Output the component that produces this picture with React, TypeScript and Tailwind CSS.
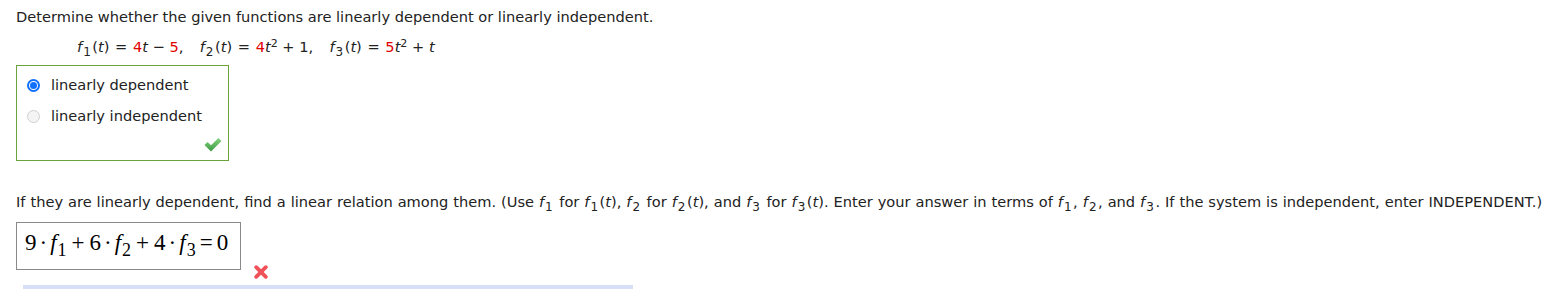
import React from 'react'

const R = ({ children }: { children: React.ReactNode }) => <span className="text-[#e00000]">{children}</span>
const I = ({ children }: { children: React.ReactNode }) => <i className="italic">{children}</i>
const Sub = ({ children }: { children: React.ReactNode }) => (
  <sub className="text-[12px] relative top-[4px] ml-[1px] mr-[1.5px]">{children}</sub>
)
const Eq = () => <span className="mx-[1px]">=</span>
const Gap = () => <span className="inline-block w-[7px]" />

function F({ n }: { n: number }) {
  return (
    <>
      <I>f</I>
      <Sub>{n}</Sub>
    </>
  )
}

function Check() {
  return (
    <svg width="18" height="15" viewBox="0 0 18 15">
      <defs>
        <linearGradient id="g" x1="0" y1="0" x2="0" y2="1">
          <stop offset="0" stopColor="#86d47f" />
          <stop offset="1" stopColor="#3a9a42" />
        </linearGradient>
      </defs>
      <path d="M0.5 8 L3.6 5 L7 8.3 L14.4 1 L17.5 4 L7 14.5 Z" fill="url(#g)" />
    </svg>
  )
}

function Cross() {
  return (
    <svg width="14" height="14" viewBox="0 0 14 14">
      <path d="M2.2 2.2 L11.8 11.8 M11.8 2.2 L2.2 11.8" stroke="#f0525a" strokeWidth="3.8" strokeLinecap="round" />
    </svg>
  )
}

function Radio({ checked }: { checked?: boolean }) {
  if (checked) {
    return (
      <span className="w-[13px] h-[13px] rounded-full border-2 border-[#0f6fff] flex items-center justify-center bg-white">
        <span className="w-[7px] h-[7px] rounded-full bg-[#0f6fff]" />
      </span>
    )
  }
  return <span className="w-[13px] h-[13px] rounded-full border border-[#d0d0d0] bg-[#f4f4f4]" />
}

const MSub = ({ children }: { children: React.ReactNode }) => (
  <sub className="text-[18px] relative top-[8px] ml-[1px]">{children}</sub>
)

export default function App() {
  return (
    <div className="w-[1554px] h-[289px] overflow-hidden bg-white text-[#222] text-[14.6px] font-['DejaVu_Sans','Verdana',sans-serif] pl-4 pt-[8px]">
      <p className="leading-[18px]">Determine whether the given functions are linearly dependent or linearly independent.</p>
      <p className="pl-[61px] mt-[12px] leading-[18px] whitespace-nowrap">
        <F n={1} />(<I>t</I>) <Eq /> <R>4</R><I>t</I> − <R>5</R>,&nbsp; <Gap /><F n={2} />(<I>t</I>) <Eq /> <R>4</R><I>t</I><sup className="text-[11px]">2</sup> + 1,&nbsp; <Gap /><F n={3} />(<I>t</I>) <Eq /> <R>5</R><I>t</I><sup className="text-[11px]">2</sup> + <I>t</I>
      </p>
      <div className="mt-[9px] w-[213px] h-[96px] border border-[#6aa33a] flex flex-col pl-[10px] pt-[10px]">
        <label className="flex items-center gap-[11px] h-[18px]">
          <Radio checked />
          <span>linearly dependent</span>
        </label>
        <label className="flex items-center gap-[11px] h-[18px] mt-[13px]">
          <Radio />
          <span>linearly independent</span>
        </label>
        <div className="flex justify-end pr-[6px] mt-[12px]">
          <Check />
        </div>
      </div>
      <p className="mt-[32px] leading-[18px] whitespace-nowrap [word-spacing:0.35px]">
        If they are linearly dependent, find a linear relation among them. (Use <F n={1} /> for <F n={1} />(<I>t</I>), <F n={2} /> for <F n={2} />(<I>t</I>), and <F n={3} /> for <F n={3} />(<I>t</I>). Enter your answer in terms of <F n={1} />, <F n={2} />, and <F n={3} />. If the system is independent, enter INDEPENDENT.)
      </p>
      <div className="flex items-end mt-[11px]">
        <div className="w-[225px] h-[48px] border border-[#8a8a8a] flex items-center pl-[8px] pb-[8px] text-[23px] leading-none text-black font-['Liberation_Serif',serif]">
          <span>9</span><span className="mx-[3px]">·</span><i>f</i><MSub>1</MSub>
          <span className="mx-[5px]">+</span>
          <span>6</span><span className="mx-[3px]">·</span><i>f</i><MSub>2</MSub>
          <span className="mx-[5px]">+</span>
          <span>4</span><span className="mx-[3px]">·</span><i>f</i><MSub>3</MSub>
          <span className="mx-[4px]">=</span>
          <span>0</span>
        </div>
        <div className="ml-[13px] mb-[-9px]">
          <Cross />
        </div>
      </div>
      <div className="ml-[7px] mt-[15px] w-[610px] h-[6px] bg-[#d6def8]" />
    </div>
  )
}
